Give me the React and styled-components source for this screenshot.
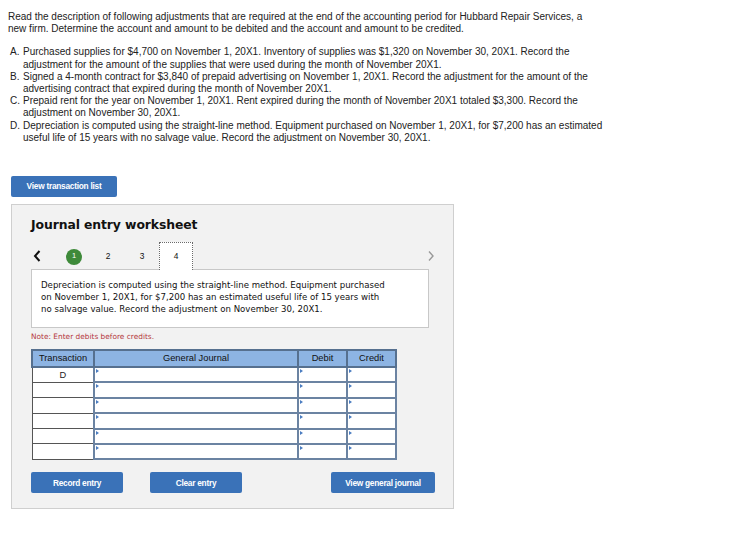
import React from 'react'
import styled, { createGlobalStyle } from 'styled-components'

const GlobalStyle = createGlobalStyle`
    body{
        margin: 0;
        background: #fff;
        font-family: "Liberation Sans", Arial, sans-serif;
    }
`

const adjustments = [
    { key: 'A.', text: 'Purchased supplies for $4,700 on November 1, 20X1. Inventory of supplies was $1,320 on November 30, 20X1. Record the adjustment for the amount of the supplies that were used during the month of November 20X1.' },
    { key: 'B.', text: 'Signed a 4-month contract for $3,840 of prepaid advertising on November 1, 20X1. Record the adjustment for the amount of the advertising contract that expired during the month of November 20X1.' },
    { key: 'C.', text: 'Prepaid rent for the year on November 1, 20X1. Rent expired during the month of November 20X1 totaled $3,300. Record the adjustment on November 30, 20X1.' },
    { key: 'D.', text: 'Depreciation is computed using the straight-line method. Equipment purchased on November 1, 20X1, for $7,200 has an estimated useful life of 15 years with no salvage value. Record the adjustment on November 30, 20X1.' },
]

const rows = ['D', '', '', '', '', '']

const App = () => {
    return (
        <>
            <GlobalStyle />
            <Page>
                <Intro>
                    Read the description of following adjustments that are required at the end of the accounting period for Hubbard Repair Services, a new firm. Determine the account and amount to be debited and the account and amount to be credited.
                </Intro>
                <List>
                    {adjustments.map((a) => (
                        <li key={a.key}>
                            <span className='key'>{a.key}</span>
                            <span>{a.text}</span>
                        </li>
                    ))}
                </List>
                <BlueButton $width='106px'>View transaction list</BlueButton>
                <Panel>
                    <Title>Journal entry worksheet</Title>
                    <Steps>
                        <Arrow>
                            <svg width="8" height="12" viewBox="0 0 8 12"><path d="M6.5 1 L2 6 L6.5 11" fill="none" stroke="#111" strokeWidth="2" /></svg>
                        </Arrow>
                        <Step><Done>1</Done></Step>
                        <Step>2</Step>
                        <Step>3</Step>
                        <Step $active>4</Step>
                        <Next>
                            <svg width="8" height="12" viewBox="0 0 8 12"><path d="M2 1.5 L6 6 L2 10.5" fill="none" stroke="#999" strokeWidth="1.4" /></svg>
                        </Next>
                    </Steps>
                    <Description>
                        Depreciation is computed using the straight-line method. Equipment purchased on November 1, 20X1, for $7,200 has an estimated useful life of 15 years with no salvage value. Record the adjustment on November 30, 20X1.
                    </Description>
                    <Note>Note: Enter debits before credits.</Note>
                    <Table>
                        <thead>
                            <tr>
                                <th style={{ width: '60px' }}>Transaction</th>
                                <th>General Journal</th>
                                <th style={{ width: '47px' }}>Debit</th>
                                <th style={{ width: '47px' }}>Credit</th>
                            </tr>
                        </thead>
                        <tbody>
                            {rows.map((r, i) => (
                                <tr key={i}>
                                    <td className='tx'>{r}</td>
                                    <td className='input'><Mark /></td>
                                    <td className='input'><Mark /></td>
                                    <td className='input'><Mark /></td>
                                </tr>
                            ))}
                        </tbody>
                    </Table>
                    <Actions>
                        <BlueButton $width='92px'>Record entry</BlueButton>
                        <BlueButton $width='92px'>Clear entry</BlueButton>
                        <Spacer />
                        <BlueButton $width='104px'>View general journal</BlueButton>
                    </Actions>
                </Panel>
            </Page>
        </>
    )
}
export default App

const Page = styled.div`
    padding: 11px 8px 20px 8px;
    width: 714px;
    color: #222;
    font-size: 10px;
    line-height: 12.2px;
`

const Intro = styled.p`
    margin: 0 0 11px 0;
    width: 594px;
`

const List = styled.ul`
    list-style: none;
    margin: 0 0 32px 2px;
    padding: 0;
    width: 598px;
    li{
        display: flex;
    }
    .key{
        flex: 0 0 13px;
    }
`

const BlueButton = styled.div`
    width: ${(p) => p.$width};
    height: 21px;
    margin-left: 3px;
    background: #3a72b8;
    border-radius: 2px;
    color: #fff;
    font-family: "Liberation Sans", Arial, sans-serif;
    font-weight: bold;
    font-size: 8.3px;
    letter-spacing: -0.25px;
    display: flex;
    align-items: center;
    justify-content: center;
    flex-shrink: 0;
`

const Panel = styled.div`
    margin: 7px 0 0 3px;
    width: 443px;
    height: 305px;
    box-sizing: border-box;
    background: #f2f2f2;
    border: 1px solid #cfcfcf;
    padding: 12px 0 0 19px;
    font-family: "DejaVu Sans", Verdana, sans-serif;
    ${BlueButton}{
        margin-left: 0;
    }
`

const Title = styled.div`
    font-weight: bold;
    font-size: 12.4px;
    line-height: 16px;
    letter-spacing: -0.1px;
    color: #111;
`

const Steps = styled.div`
    display: flex;
    align-items: stretch;
    height: 27px;
    margin-top: 9px;
    width: 398px;
    position: relative;
`

const Arrow = styled.div`
    width: 24px;
    display: flex;
    align-items: center;
    padding-left: 2px;
`

const Step = styled.div`
    width: 34px;
    box-sizing: border-box;
    display: flex;
    align-items: center;
    justify-content: center;
    font-family: "Liberation Sans", Arial, sans-serif;
    font-size: 8.4px;
    color: #111;
    background: ${(p) => (p.$active ? '#fff' : 'transparent')};
    border: ${(p) => (p.$active ? '1px dotted #6a6a6a' : '1px solid transparent')};
    border-bottom: none;
    margin-bottom: -1px;
    z-index: 1;
`

const Done = styled.span`
    width: 16px;
    height: 16px;
    border-radius: 50%;
    background: #3e8a3a;
    color: #fff;
    font-size: 7.5px;
    display: flex;
    align-items: center;
    justify-content: center;
`

const Next = styled.div`
    position: absolute;
    right: -6px;
    top: 8px;
`

const Description = styled.div`
    width: 398px;
    height: 59px;
    box-sizing: border-box;
    background: #fff;
    border: 1px solid #c8c8c8;
    padding: 9px 36px 0 9px;
    font-size: 8.6px;
    line-height: 12px;
    color: #111;
`

const Note = styled.div`
    margin-top: 4px;
    font-size: 7.4px;
    line-height: 10px;
    color: #b4363b;
`

const Table = styled.table`
    margin-top: 7px;
    width: 366px;
    border-collapse: collapse;
    font-family: "Liberation Sans", Arial, sans-serif;
    font-size: 9.3px;
    th{
        height: 15px;
        padding: 0;
        background: #8db4e3;
        border: 2px solid #56708f;
        font-weight: normal;
        color: #111;
    }
    td{
        height: 13.4px;
        padding: 0;
        background: #fff;
        position: relative;
    }
    .tx{
        border: 1px solid #555;
        text-align: center;
        color: #222;
    }
    .input{
        border: 2px solid #6b83a2;
    }
`

const Mark = styled.span`
    position: absolute;
    left: 1px;
    top: 1px;
    width: 0;
    height: 0;
    border-top: 2px solid transparent;
    border-bottom: 2px solid transparent;
    border-left: 3px solid #4a7cc0;
`

const Actions = styled.div`
    display: flex;
    gap: 27px;
    margin-top: 12px;
    width: 404px;
`

const Spacer = styled.div`
    flex: 1;
`
